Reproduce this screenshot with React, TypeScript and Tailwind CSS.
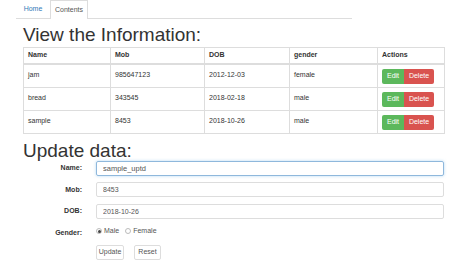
import { useState } from 'react';

type Person = { name: string; mob: string; dob: string; gender: string };

const people: Person[] = [
  { name: 'jam', mob: '985647123', dob: '2012-12-03', gender: 'female' },
  { name: 'bread', mob: '343545', dob: '2018-02-18', gender: 'male' },
  { name: 'sample', mob: '8453', dob: '2018-10-26', gender: 'male' },
];

const cols = ['w-[87px]', 'w-[94px]', 'w-[85px]', 'w-[88px]', 'w-[67px]'];

function FormRow({ label, children }: { label: string; children: React.ReactNode }) {
  return (
    <div className="flex items-center">
      <label className="w-[59px] text-right text-[7px] leading-[10px] font-bold text-[#333]">{label}</label>
      <div className="ml-[14px] flex-1">{children}</div>
    </div>
  );
}

export default function App() {
  const [name, setName] = useState('sample_uptd');
  const [gender, setGender] = useState('male');

  return (
    <div className="h-[267px] w-[474px] overflow-hidden bg-white font-['Liberation_Sans',Arial,sans-serif] text-[#333]">
      <div className="ml-[16px] flex h-[19px] w-[336px] border-b border-[#ddd]">
        <a className="flex h-[18px] w-[34px] items-center justify-center text-[7px] text-[#337ab7]">Home</a>
        <span className="-mb-px flex h-[19px] w-[38px] items-center justify-center border-x border-t border-[#ddd] bg-white text-[7px] text-[#555]">
          Contents
        </span>
      </div>

      <div className="px-[23px] pr-[30px]">
        <h1 className="mt-[6px] text-[19px] leading-[20px] text-[#333]">View the Information:</h1>

        <table className="mt-[2px] w-[421px] table-fixed border-collapse border border-[#ddd] text-[7px] leading-[10px]">
          <thead>
            <tr className="h-[16px] border-b-2 border-[#ddd]">
              {['Name', 'Mob', 'DOB', 'gender', 'Actions'].map((h, i) => (
                <th key={h} className={`${cols[i]} border-r border-[#ddd] px-[4px] text-left align-middle font-bold text-[#333]`}>
                  {h}
                </th>
              ))}
            </tr>
          </thead>
          <tbody>
            {people.map((p) => (
              <tr key={p.name} className="border-t border-[#ddd] text-[#333]">
                <td className="border-r border-[#ddd] px-[4px] pt-[5px] align-top">{p.name}</td>
                <td className="border-r border-[#ddd] px-[4px] pt-[5px] align-top">{p.mob}</td>
                <td className="border-r border-[#ddd] px-[4px] pt-[5px] align-top">{p.dob}</td>
                <td className="border-r border-[#ddd] px-[4px] pt-[5px] align-top">{p.gender}</td>
                <td className="px-[4px] pt-[4px] pb-[3px] align-top">
                  <div className="flex">
                    <button className="flex h-[15px] w-[22px] items-center justify-center rounded-l-[2px] bg-[#5cb85c] text-[7px] text-white">
                      Edit
                    </button>
                    <button className="flex h-[15px] w-[30px] items-center justify-center rounded-r-[2px] bg-[#d9534f] text-[7px] text-white">
                      Delete
                    </button>
                  </div>
                </td>
              </tr>
            ))}
          </tbody>
        </table>

        <h2 className="mt-[7px] text-[19px] leading-[20px] text-[#333]">Update data:</h2>

        <div className="flex w-[421px] flex-col gap-[6.5px]">
          <FormRow label="Name:">
            <input
              value={name}
              onChange={(e) => setName(e.target.value)}
              className="block h-[15px] w-full rounded-[2px] border border-[#8fb8dc] px-[6px] py-0 text-[7.5px] leading-[11px] text-[#555] shadow-[0_0_3px_rgba(102,175,233,0.5)] outline-none"
            />
          </FormRow>
          <FormRow label="Mob:">
            <input
              defaultValue="8453"
              className="block h-[15px] w-full rounded-[2px] border border-[#ddd] px-[6px] py-0 text-[7px] leading-[11px] text-[#555] outline-none"
            />
          </FormRow>
          <FormRow label="DOB:">
            <input
              defaultValue="2018-10-26"
              className="block h-[15px] w-full rounded-[2px] border border-[#ddd] px-[6px] py-0 text-[7px] leading-[11px] text-[#555] outline-none"
            />
          </FormRow>
          <div className="mt-[1px] flex items-start text-[7px] leading-[10px]">
            <span className="w-[59px] pt-[2px] text-right font-bold">Gender:</span>
            <div className="ml-[14px] flex items-center gap-[6px] text-[#555]">
              <label className="flex items-center gap-[2px]">
                <span
                  onClick={() => setGender('male')}
                  className="flex h-[6px] w-[6px] items-center justify-center rounded-full border border-[#bbb] bg-white"
                >
                  {gender === 'male' && <span className="h-[3px] w-[3px] rounded-full bg-[#444]" />}
                </span>
                Male
              </label>
              <label className="flex items-center gap-[2px]">
                <span
                  onClick={() => setGender('female')}
                  className="flex h-[6px] w-[6px] items-center justify-center rounded-full border border-[#bbb] bg-white"
                >
                  {gender === 'female' && <span className="h-[3px] w-[3px] rounded-full bg-[#444]" />}
                </span>
                Female
              </label>
            </div>
          </div>
          <div className="ml-[73px] flex gap-[10px]">
            <button className="h-[15px] w-[28px] rounded-[2px] border border-[#ddd] bg-white text-[7px] text-[#555]">
              Update
            </button>
            <button className="h-[15px] w-[27px] rounded-[2px] border border-[#ddd] bg-white text-[7px] text-[#555]">
              Reset
            </button>
          </div>
        </div>
      </div>
    </div>
  );
}
